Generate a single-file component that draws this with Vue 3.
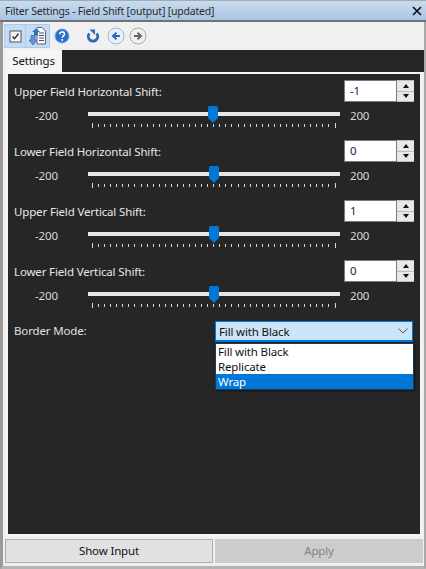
<script setup>
import { ref } from 'vue'

const shifts = ref([
  { label: 'Upper Field Horizontal Shift:', value: -1 },
  { label: 'Lower Field Horizontal Shift:', value: 0 },
  { label: 'Upper Field Vertical Shift:', value: 1 },
  { label: 'Lower Field Vertical Shift:', value: 0 }
])

const modes = ['Fill with Black', 'Replicate', 'Wrap']
const activeMode = ref('Wrap')

// thumb centre sits on the tick range, a few px in from the track ends
const thumbLeft = (value) => `${3.5 + ((value + 200) / 400) * 244.5}px`
</script>

<template>
  <div class="window">
    <div class="titlebar">
      <span class="title">Filter Settings - Field Shift [output] [updated]</span>
      <svg class="close" width="10" height="10" viewBox="0 0 10 10">
        <path d="M1 1l8 8M9 1l-8 8" stroke="#111" stroke-width="1.7" fill="none" />
      </svg>
    </div>

    <div class="frame">
      <div class="toolbar">
        <div class="tool first">
          <svg width="13" height="13" viewBox="0 0 13 13">
            <rect x="1" y="1" width="11" height="11" fill="#f4f4f4" stroke="#555" />
            <path d="M3.500 6.500l2 2.200 4-5" stroke="#333" stroke-width="1.500" fill="none" />
          </svg>
        </div>
        <div class="tool second">
          <svg width="17" height="19" viewBox="0 0 17 19">
            <path d="M8 .500h5l3.500 3.500v13H8z" fill="#fdfdfd" stroke="#5f6470" />
            <path d="M10 6h5M10 8.500h5M10 11h5M10 13.500h5" stroke="#4c5058" />
            <path d="M7 1.500L11 5H9v3.500H5V5H3z" fill="#2f6fc0" />
            <path d="M5 8.500h-3V13H0l4 5 4-5H6V8.500z" fill="#5d93d6" stroke="#2a5ea6" stroke-width=".6" />
          </svg>
        </div>
        <svg class="ico-help" width="16" height="16" viewBox="0 0 16 16">
          <circle cx="8" cy="8" r="7.200" fill="#2a6fc9" stroke="#a9c6ea" />
          <path d="M5.600 6.200c.2-3 4.900-3 4.900-.2 0 1.800-2.300 1.800-2.300 3.800" stroke="#fff" stroke-width="1.600" fill="none" />
          <circle cx="8.200" cy="12" r="1" fill="#fff" />
        </svg>
        <svg class="ico-undo" width="14" height="14" viewBox="0 0 14 14">
          <path d="M3.300 4.500a4.700 4.700 0 1 0 7.400 0" stroke="#2f68b8" stroke-width="2.800" fill="none" />
          <path d="M3.500 .5h5.500v5.500z" fill="#2f68b8" />
        </svg>
        <svg class="ico-back" width="18" height="18" viewBox="0 0 18 18">
          <circle cx="9" cy="9" r="8" fill="#e8f0fa" stroke="#9cb8dc" />
          <path d="M13 9H7M9.500 5.800L6 9l3.500 3.200" stroke="#2f68b8" stroke-width="2" fill="none" />
        </svg>
        <svg class="ico-fwd" width="18" height="18" viewBox="0 0 18 18">
          <circle cx="9" cy="9" r="8" fill="#efefef" stroke="#a8a8a8" />
          <path d="M5 9h6M8.500 5.800L12 9l-3.500 3.200" stroke="#666" stroke-width="2" fill="none" />
        </svg>
      </div>

      <div class="tabstrip">
        <div class="tab">Settings</div>
      </div>

      <div class="panel">
        <div v-for="shift in shifts" :key="shift.label" class="group">
          <div class="group-head">
            <span>{{ shift.label }}</span>
            <div class="spin">
              <div class="spin-input">{{ shift.value }}</div>
              <div class="spin-btns">
                <div class="spin-btn"><i class="arrow-up"></i></div>
                <div class="spin-btn"><i class="arrow-down"></i></div>
              </div>
            </div>
          </div>
          <div class="slider-row">
            <span class="min">-200</span>
            <div class="slider">
              <div class="track"></div>
              <svg class="thumb" :style="{ left: thumbLeft(shift.value) }" width="10" height="17" viewBox="0 0 10 17">
                <path d="M0 1.500Q0 0 1.500 0h7Q10 0 10 1.500V12l-5 5-5-5z" fill="#0078d7" />
              </svg>
              <div class="ticks">
                <i v-for="n in 41" :key="n" :class="{ tall: n === 1 || n === 41 }"></i>
              </div>
            </div>
            <span class="max">200</span>
          </div>
        </div>

        <div class="mode-row">
          <span class="mode-label">Border Mode:</span>
          <div class="combo">
            <div class="combo-box">
              <span>Fill with Black</span>
              <svg width="10" height="6" viewBox="0 0 10 6">
                <path d="M.5.500L5 5 9.500.500" stroke="#555" fill="none" />
              </svg>
            </div>
            <div class="combo-list">
              <div
                v-for="mode in modes"
                :key="mode"
                class="combo-item"
                :class="{ active: mode === activeMode }"
              >{{ mode }}</div>
            </div>
          </div>
        </div>
      </div>

      <div class="buttons">
        <div class="btn">Show Input</div>
        <div class="btn disabled">Apply</div>
      </div>
    </div>
  </div>
</template>

<style>
html,
body {
  margin: 0;
  background: #f0f0f0;
}
</style>

<style scoped>
.window {
  width: 426px;
  height: 569px;
  display: flex;
  flex-direction: column;
  box-sizing: border-box;
  font-family: "Noto Sans", sans-serif;
  font-size: 11.500px;
  letter-spacing: -0.15px;
  color: #e6e6e6;
  background: #f0f0f0;
  overflow: hidden;
}

.titlebar {
  height: 22px;
  flex: none;
  box-sizing: border-box;
  display: flex;
  align-items: center;
  justify-content: space-between;
  padding: 0 4px 0 5px;
  background: linear-gradient(#c9dcf0, #a8c4e2);
  border-top: 1px solid #a3a9b0;
  border-bottom: 2px solid #6f7276;
  color: #2a2a2a;
}

.title {
  font-size: 10.500px;
  letter-spacing: -0.2px;
}

.frame {
  flex: 1;
  display: flex;
  flex-direction: column;
  box-sizing: border-box;
  border-left: 3px solid #9a9a9a;
  border-right: 2px solid #a8a8a8;
  border-bottom: 3px solid #b4b4b4;
  min-height: 0;
}

.toolbar {
  height: 28px;
  flex: none;
  display: flex;
  align-items: center;
  padding-left: 1px;
  background: #f0f0f0;
}

.tool {
  height: 24px;
  box-sizing: border-box;
  display: flex;
  align-items: center;
  justify-content: center;
  background: #c4dcf3;
  border: 1px solid #a9cbec;
}

.first {
  width: 22px;
}

.second {
  width: 25px;
  margin-left: -1px;
}

.ico-help {
  margin-left: 4px;
}

.ico-undo {
  margin-left: 16px;
}

.ico-back {
  margin-left: 7px;
}

.ico-fwd {
  margin-left: 4px;
}

.tabstrip {
  height: 22px;
  flex: none;
  margin-left: 2px;
  background: #262626;
  display: flex;
}

.tab {
  width: 57px;
  background: #f5f5f5;
  color: #111;
  text-align: center;
  line-height: 22px;
}

.panel {
  flex: 1;
  min-height: 0;
  margin: 0 0 0 4px;
  box-sizing: border-box;
  width: 415px;
  border: 2px solid #f5f5f5;
  border-left-width: 1px;
  background: #262626;
  padding: 6px 6px 0;
}

.group {
  height: 60px;
}

.group-head {
  height: 22px;
  display: flex;
  justify-content: space-between;
  align-items: center;
}

.spin {
  display: flex;
  width: 70px;
  height: 22px;
}

.spin-input {
  width: 53px;
  box-sizing: border-box;
  border: 1px solid #7a7a7a;
  background: #fff;
  color: #1c2050;
  padding-left: 5px;
  line-height: 20px;
}

.spin-btns {
  flex: 1;
  display: flex;
  flex-direction: column;
  gap: 1px;
  padding: 1px 0;
  box-sizing: border-box;
  background: #bdbdbd;
}

.spin-btn {
  flex: 1;
  display: flex;
  align-items: center;
  justify-content: center;
  background: #e8e8e8;
}

.arrow-up,
.arrow-down {
  width: 0;
  height: 0;
  border-left: 3.500px solid transparent;
  border-right: 3.500px solid transparent;
}

.arrow-up {
  border-bottom: 4px solid #111;
}

.arrow-down {
  border-top: 4px solid #111;
}

.slider-row {
  display: grid;
  grid-template-columns: 74px 252px 1fr;
  height: 26px;
}

.min,
.max {
  line-height: 28px;
  color: #d8d8d8;
}

.min {
  padding-left: 21px;
}

.max {
  padding-left: 10px;
}

.slider {
  position: relative;
  padding-top: 10px;
}

.track {
  height: 4px;
  background: #e6e6e6;
}

.thumb {
  position: absolute;
  top: 4px;
  margin-left: -5px;
}

.ticks {
  display: flex;
  justify-content: space-between;
  align-items: center;
  height: 5px;
  margin: 7px 4px 0;
}

.ticks i {
  width: 1px;
  height: 3px;
  background: #d8d8d8;
}

.ticks i.tall {
  height: 5px;
}

.mode-row {
  display: flex;
  justify-content: space-between;
  padding-right: 1px;
  color: #e0e0e0;
}

.mode-label {
  line-height: 20px;
  padding-top: 1px;
}

.combo {
  position: relative;
  width: 198px;
  margin-top: 1px;
  color: #111;
}

.combo-box {
  height: 21px;
  box-sizing: border-box;
  display: flex;
  align-items: center;
  justify-content: space-between;
  padding: 0 4px 0 3px;
  background: #cce4f7;
  border: 1px solid #0078d7;
  border-bottom-width: 2px;
}

.combo-list {
  position: absolute;
  top: 22px;
  left: 0;
  width: 199px;
  box-sizing: border-box;
  background: #fff;
  border: 1px solid #1a3a5a;
  box-shadow: 1px 1px 2px rgba(0, 0, 0, 0.5);
}

.combo-item {
  height: 15px;
  line-height: 15px;
  padding-left: 2px;
}

.combo-item.active {
  background: #0078d7;
  color: #fff;
}

.buttons {
  display: flex;
  gap: 2px;
  margin: 3px 0 3px 2px;
  height: 24px;
  flex: none;
}

.btn {
  width: 208px;
  box-sizing: border-box;
  text-align: center;
  line-height: 22px;
  background: #e1e1e1;
  border: 1px solid #adadad;
  color: #111;
}

.btn.disabled {
  background: #cccccc;
  border-color: #cccccc;
  color: #838383;
}
</style>
